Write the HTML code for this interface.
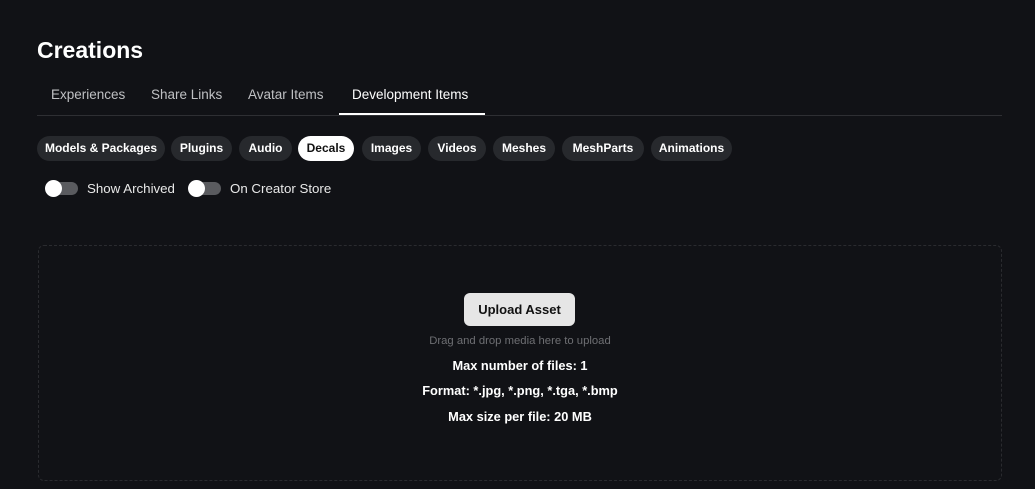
<!DOCTYPE html>
<html><head><style>
*{margin:0;padding:0;box-sizing:border-box}
body{width:1035px;height:489px;background:#111216;font-family:"Liberation Sans",sans-serif;color:#fff;position:relative;overflow:hidden}
.a{position:absolute;white-space:nowrap}
h1{position:absolute;left:37px;top:37px;font-size:23px;font-weight:bold}
.tab{position:absolute;top:87px;font-size:13.5px;color:#bfc0c3}
.chip{position:absolute;top:136px;height:25px;border-radius:13px;background:#27292d;font-size:12px;font-weight:bold;line-height:25px;text-align:center;color:#fff}
.tog{position:absolute;top:182px;width:32px;height:13px;border-radius:7px;background:#5a5b5f}
.tog::after{content:"";position:absolute;left:-1px;top:-2px;width:17px;height:17px;border-radius:50%;background:#fff}
.c{position:absolute;left:38px;width:964px;text-align:center;font-size:12.8px;font-weight:bold}
</style></head><body>
<h1>Creations</h1>
<div class="tab" style="left:51px">Experiences</div>
<div class="tab" style="left:151px">Share Links</div>
<div class="tab" style="left:248px">Avatar Items</div>
<div class="tab" style="left:352px;color:#fff">Development Items</div>
<div class="a" style="left:37px;top:115px;width:965px;height:1px;background:#2e2f33"></div>
<div class="a" style="left:339px;top:113px;width:146px;height:2px;background:#fff"></div>
<div class="chip" style="left:37px;width:128px">Models &amp; Packages</div>
<div class="chip" style="left:171px;width:61px">Plugins</div>
<div class="chip" style="left:239px;width:53px">Audio</div>
<div class="chip" style="left:298px;width:56px;background:#fff;color:#111">Decals</div>
<div class="chip" style="left:362px;width:59px">Images</div>
<div class="chip" style="left:428px;width:58px">Videos</div>
<div class="chip" style="left:493px;width:62px">Meshes</div>
<div class="chip" style="left:562px;width:82px">MeshParts</div>
<div class="chip" style="left:651px;width:81px">Animations</div>
<div class="tog" style="left:46px"></div>
<div class="a" style="left:87px;top:181px;font-size:13.3px;color:#e8e8e8">Show Archived</div>
<div class="tog" style="left:189px"></div>
<div class="a" style="left:230px;top:181px;font-size:13.3px;color:#e8e8e8">On Creator Store</div>
<div class="a" style="left:38px;top:245px;width:964px;height:236px;border:1px dashed #2a2b2f;border-radius:6px"></div>
<div class="a" style="left:464px;top:293px;width:111px;height:33px;border-radius:6px;background:#e6e6e6;color:#111;font-size:13px;font-weight:bold;line-height:33px;text-align:center">Upload Asset</div>
<div class="c" style="top:335px;font-weight:normal;font-size:11.3px;color:#6e6f73">Drag and drop media here to upload</div>
<div class="c" style="top:358px">Max number of files: 1</div>
<div class="c" style="top:383px">Format: *.jpg, *.png, *.tga, *.bmp</div>
<div class="c" style="top:409px">Max size per file: 20 MB</div>
</body></html>
